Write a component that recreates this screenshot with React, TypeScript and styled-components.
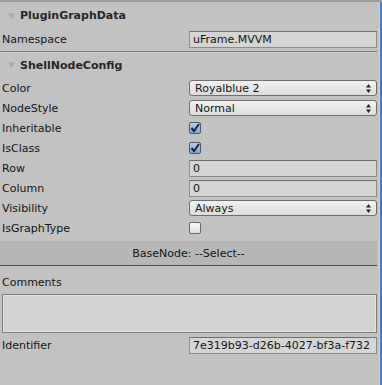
import React from "react";
import styled, { createGlobalStyle } from "styled-components";

const GlobalStyle = createGlobalStyle`
  html, body {
    margin: 0;
    padding: 0;
    background: #c2c2c2;
  }
  body {
    font: normal normal normal 11px "DejaVu Sans", "Liberation Sans", sans-serif;
    color: #141414;
  }
`;

const Page = styled.div`
  display: flex;
  width: 382px;
  height: 385px;
  background: #c2c2c2;
  border-top: 2px solid #9c9c9c;
  box-sizing: border-box;
  overflow: hidden;
`;

const Inspector = styled.div`
  display: flex;
  flex-direction: column;
  flex: 1;
  padding-right: 2px;
  border-right: 1px solid #d2d2d2;
`;

const Edge = styled.div`
  width: 2px;
  background: #3a7fd0;
`;

const Header = styled.div<{ $height: number }>`
  display: flex;
  align-items: center;
  gap: 5px;
  height: ${(p) => p.$height}px;
  padding-left: 8px;
  font-weight: bold;
  color: #262626;
`;

const Row = styled.div<{ $gap?: number }>`
  display: flex;
  align-items: center;
  height: 20px;
  padding-left: 2px;
  margin-top: ${(p) => p.$gap ?? 0}px;
`;

const Label = styled.span`
  width: 187px;
  flex: none;
`;

const TextField = styled.div`
  flex: 1;
  height: 17px;
  box-sizing: border-box;
  padding-left: 3px;
  line-height: 15px;
  background: #d5d5d5;
  border: 1px solid #8c8c8c;
  border-top-color: #6e6e6e;
  white-space: nowrap;
  overflow: hidden;
`;

const Dropdown = styled.div`
  flex: 1;
  display: flex;
  align-items: center;
  justify-content: space-between;
  height: 16px;
  box-sizing: border-box;
  padding: 0 5px 0 5px;
  border: 1px solid #6f6f6f;
  border-radius: 3px;
  background: linear-gradient(#f2f2f2, #dcdcdc);
`;

const Check = styled.div<{ $on?: boolean }>`
  width: 12px;
  height: 12px;
  box-sizing: border-box;
  border: 1px solid ${(p) => (p.$on ? "#4d5a6e" : "#6a6a6a")};
  border-radius: 2px;
  background: ${(p) =>
    p.$on ? "linear-gradient(#b9d0ee, #7fa3d6)" : "linear-gradient(#fafafa, #dedede)"};
  display: flex;
  align-items: center;
  justify-content: center;
`;

const Divider = styled.div`
  margin-top: 2px;
  height: 1px;
  background: #777;
  box-shadow: 0 1px 0 #d0d0d0;
`;

const Bar = styled.div`
  margin-top: 3px;
  height: 24px;
  display: flex;
  align-items: center;
  justify-content: center;
  background: #b7b7b7;
  border-bottom: 1px solid #4e4e4e;
`;

const Comments = styled.div`
  margin: 2px 0 0 2px;
  height: 39px;
  box-sizing: border-box;
  background: #d3d3d3;
  border: 1px solid #7c7c7c;
  box-shadow: inset 0 0 0 1px #e2e2e2;
`;

const Foldout = () => (
  <svg width="7" height="6" viewBox="0 0 7 6">
    <path d="M0 0.5 H7 L3.5 6 Z" fill="#aaaaaa" />
  </svg>
);

const Arrows = () => (
  <svg width="5" height="9" viewBox="0 0 5 9">
    <path d="M2.5 0 L5 3.5 H0 Z M2.5 9 L0 5.5 H5 Z" fill="#222" />
  </svg>
);

const Tick = () => (
  <svg width="10" height="10" viewBox="0 0 10 10">
    <path d="M1.5 5 L4 8 L9 1" stroke="#1c2333" strokeWidth="2" fill="none" />
  </svg>
);

const Select = ({ value }: { value: string }) => (
  <Dropdown>
    <span>{value}</span>
    <Arrows />
  </Dropdown>
);

export default function App() {
  return (
    <Page>
      <GlobalStyle />
      <Inspector>
        <Header $height={27}>
          <Foldout />
          PluginGraphData
        </Header>
        <Row>
          <Label>Namespace</Label>
          <TextField>uFrame.MVVM</TextField>
        </Row>
        <Divider />
        <Header $height={26}>
          <Foldout />
          ShellNodeConfig
        </Header>
        <Row>
          <Label>Color</Label>
          <Select value="Royalblue 2" />
        </Row>
        <Row>
          <Label>NodeStyle</Label>
          <Select value="Normal" />
        </Row>
        <Row>
          <Label>Inheritable</Label>
          <Check $on>
            <Tick />
          </Check>
        </Row>
        <Row>
          <Label>IsClass</Label>
          <Check $on>
            <Tick />
          </Check>
        </Row>
        <Row>
          <Label>Row</Label>
          <TextField>0</TextField>
        </Row>
        <Row>
          <Label>Column</Label>
          <TextField>0</TextField>
        </Row>
        <Row>
          <Label>Visibility</Label>
          <Select value="Always" />
        </Row>
        <Row>
          <Label>IsGraphType</Label>
          <Check />
        </Row>
        <Bar>BaseNode: --Select--</Bar>
        <Row $gap={6}>
          <Label>Comments</Label>
        </Row>
        <Comments />
        <Row $gap={2}>
          <Label>Identifier</Label>
          <TextField>7e319b93-d26b-4027-bf3a-f732</TextField>
        </Row>
      </Inspector>
      <Edge />
    </Page>
  );
}
